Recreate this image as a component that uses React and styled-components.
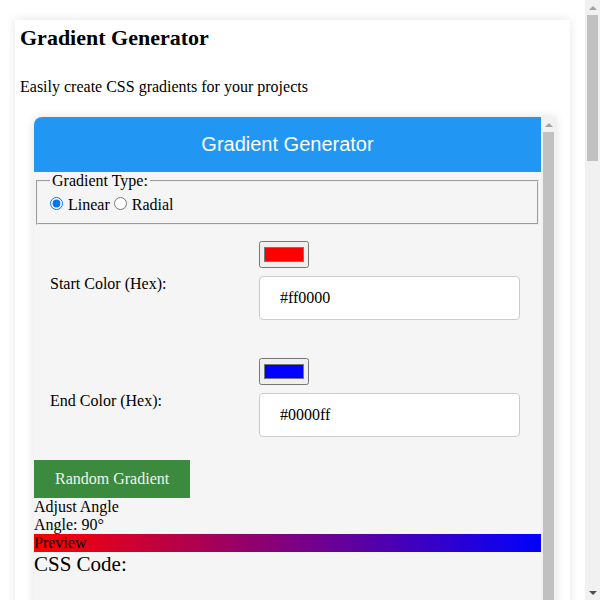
import React, { useState } from "react";
import styled, { createGlobalStyle } from "styled-components";

const GlobalStyle = createGlobalStyle`
  body {
    margin: 8px 23px 8px 8px;
    background: #ffffff;
    font-family: "Liberation Serif", "Times New Roman", serif;
    color: #000;
  }
`;

// grey classic scrollbar look (the page and the panel both show one)
function Scrollbar({ thumb, withDown }) {
  return (
    <>
      <RailButton>
        <Arrow $dir="up" />
      </RailButton>
      <RailThumb $length={thumb} />
      {withDown && (
        <>
          <RailFill />
          <RailButton>
            <Arrow $dir="down" />
          </RailButton>
        </>
      )}
    </>
  );
}

export default function App() {
  const [type, setType] = useState("linear");
  const [start, setStart] = useState("#ff0000");
  const [end, setEnd] = useState("#0000ff");
  const angle = 90;

  const randomHex = () =>
    "#" +
    Math.floor(Math.random() * 0xffffff)
      .toString(16)
      .padStart(6, "0");

  const gradient =
    type === "linear"
      ? `linear-gradient(${angle}deg, ${start}, ${end})`
      : `radial-gradient(circle, ${start}, ${end})`;

  return (
    <>
      <GlobalStyle />
      <PageRail>
        <Scrollbar thumb={146} withDown />
      </PageRail>
      <Card>
        <Title>Gradient Generator</Title>
        <Subtitle>Easily create CSS gradients for your projects</Subtitle>
        <Panel>
          <PanelBody>
            <PanelHeader>Gradient Generator</PanelHeader>
            <TypeSet>
              <legend>Gradient Type:</legend>
              <label>
                <Radio
                  type="radio"
                  name="type"
                  checked={type === "linear"}
                  onChange={() => setType("linear")}
                />{" "}
                Linear
              </label>{" "}
              <label>
                <Radio
                  type="radio"
                  name="type"
                  checked={type === "radial"}
                  onChange={() => setType("radial")}
                />{" "}
                Radial
              </label>
            </TypeSet>

            <ColorRow>
              <RowLabel>Start Color (Hex):</RowLabel>
              <Field>
                <input
                  type="color"
                  value={start}
                  onChange={(e) => setStart(e.target.value)}
                />
                <HexInput
                  type="text"
                  value={start}
                  onChange={(e) => setStart(e.target.value)}
                />
              </Field>
            </ColorRow>

            <ColorRow>
              <RowLabel>End Color (Hex):</RowLabel>
              <Field>
                <input
                  type="color"
                  value={end}
                  onChange={(e) => setEnd(e.target.value)}
                />
                <HexInput
                  type="text"
                  value={end}
                  onChange={(e) => setEnd(e.target.value)}
                />
              </Field>
            </ColorRow>

            <RandomButton
              onClick={() => {
                setStart(randomHex());
                setEnd(randomHex());
              }}
            >
              Random Gradient
            </RandomButton>
            <TextLine>Adjust Angle</TextLine>
            <TextLine>Angle: {angle}°</TextLine>
            <Preview style={{ background: gradient }}>Preview</Preview>
            <CodeTitle>CSS Code:</CodeTitle>
          </PanelBody>
          <PanelRail>
            <Scrollbar thumb={1900} />
          </PanelRail>
        </Panel>
      </Card>
    </>
  );
}

// styling
const PageRail = styled.div`
  position: fixed;
  top: 0;
  right: 0;
  width: 15px;
  height: 100vh;
  display: flex;
  flex-direction: column;
  background: #f1f1f1;
`;
const PanelRail = styled.div`
  display: flex;
  flex-direction: column;
  background: #f1f1f1;
`;
const RailButton = styled.div`
  flex: 0 0 15px;
  display: flex;
  align-items: center;
  justify-content: center;
`;
const Arrow = styled.span`
  width: 0;
  height: 0;
  border-left: 4px solid transparent;
  border-right: 4px solid transparent;
  ${({ $dir }) =>
    $dir === "up"
      ? "border-bottom: 4px solid #a3a3a3;"
      : "border-top: 4px solid #505050;"}
`;
const RailThumb = styled.div`
  flex: 0 0 ${({ $length }) => $length}px;
  margin: 0 2px;
  background: #c1c1c1;
`;
const RailFill = styled.div`
  flex: 1;
`;
const Card = styled.div`
  box-sizing: border-box;
  width: 555px;
  margin: 12px auto 0;
  padding: 5px 5px 20px;
  background: #ffffff;
  box-shadow: 0 0 10px rgba(0, 0, 0, 0.1);
`;
const Title = styled.h2`
  margin: 0 0 27px;
  font-size: 22px;
  font-weight: bold;
`;
const Subtitle = styled.p`
  margin: 0 0 21px;
  font-size: 16px;
`;
const Panel = styled.div`
  display: grid;
  grid-template-columns: 1fr 15px;
  height: 2197px;
  margin: 0 9px 0 14px;
  overflow: hidden;
  background: #f5f5f5;
  border-radius: 8px 0 8px 8px;
  box-shadow: 0 0 10px rgba(0, 0, 0, 0.12);
`;
const PanelBody = styled.div`
  min-width: 0;
`;
const PanelHeader = styled.div`
  padding: 16px;
  background: #2196f3;
  color: #ffffff;
  font-family: "Liberation Sans", Arial, sans-serif;
  font-size: 20px;
  line-height: 23px;
  text-align: center;
`;
const TypeSet = styled.fieldset`
  margin: 0 2px;
  padding: 0.35em 0.75em 9px;
  font-size: 16px;
`;
const Radio = styled.input`
  margin: 0 1px 0 0;
`;
const ColorRow = styled.div`
  display: grid;
  grid-template-columns: 209px 1fr;
  align-items: center;
  padding: 16px;
  margin-bottom: 6px;
`;
const RowLabel = styled.label`
  padding-top: 7px;
  font-size: 16px;
`;
const Field = styled.div`
  display: flex;
  flex-direction: column;
  align-items: flex-start;
  gap: 8px;
`;
const HexInput = styled.input`
  box-sizing: border-box;
  width: 98%;
  padding: 12px 20px;
  border: 1px solid #cccccc;
  border-radius: 4px;
  background: #ffffff;
  font-family: "Liberation Serif", "Times New Roman", serif;
  font-size: 16px;
  color: #000;
`;
const RandomButton = styled.button`
  display: block;
  margin-top: 7px;
  padding: 10px 21px;
  border: none;
  border-radius: 0;
  background: #3b8a3e;
  color: #f3f3f3;
  font-family: "Liberation Serif", "Times New Roman", serif;
  font-size: 16px;
  line-height: 18px;
  cursor: pointer;
`;
const TextLine = styled.div`
  font-size: 16px;
  line-height: 18px;
`;
const Preview = styled.div`
  height: 18px;
  font-size: 16px;
  line-height: 18px;
`;
const CodeTitle = styled.div`
  font-size: 21px;
`;
